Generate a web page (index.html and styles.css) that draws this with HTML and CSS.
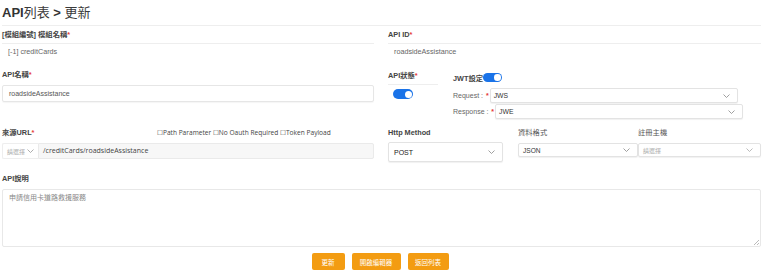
FILE: index.html
```html
<!DOCTYPE html>
<html lang="zh-Hant">
<head>
<meta charset="utf-8">
<link rel="stylesheet" href="styles.css">
</head>
<body>
<div class="page">
  <h1 class="title"><span class="title-en">API</span>列表 <span class="title-en">&gt;</span> 更新</h1>

  <div class="row r1">
    <div class="field">
      <div class="label line">[模組編號] 模組名稱<span class="req">*</span></div>
      <div class="value">[-1] creditCards</div>
    </div>
    <div class="field">
      <div class="label line">API ID<span class="req">*</span></div>
      <div class="value">roadsideAssistance</div>
    </div>
  </div>

  <div class="row r2">
    <div class="field">
      <div class="label">API名稱<span class="req">*</span></div>
      <div class="input">roadsideAssistance</div>
    </div>
    <div class="status-jwt">
      <div class="status">
        <div class="label line">API狀態<span class="req">*</span></div>
        <span class="toggle"><span class="knob"></span></span>
      </div>
      <div class="jwt">
        <div class="jwt-head"><span class="label">JWT設定</span><span class="toggle small"><span class="knob"></span></span></div>
        <div class="jwt-row">
          <span class="jwt-label">Request : </span><span class="req">*</span>
          <div class="select jwt-sel">JWS<svg class="chev" width="7" height="4" viewBox="0 0 7 4"><path d="M.5.5 3.5 3.5 6.5.5" fill="none" stroke="#888" stroke-width=".8"/></svg></div>
        </div>
        <div class="jwt-row">
          <span class="jwt-label">Response : </span><span class="req">*</span>
          <div class="select jwt-sel">JWE<svg class="chev" width="7" height="4" viewBox="0 0 7 4"><path d="M.5.5 3.5 3.5 6.5.5" fill="none" stroke="#888" stroke-width=".8"/></svg></div>
        </div>
      </div>
    </div>
  </div>

  <div class="row r3">
    <div class="field">
      <div class="label url-head"><span>來源URL<span class="req">*</span></span><span class="checks">☐Path Parameter ☐No Oauth Required ☐Token Payload</span></div>
      <div class="url-group">
        <div class="url-sel">請選擇<svg class="chev" width="7" height="4" viewBox="0 0 7 4"><path d="M.5.5 3.5 3.5 6.5.5" fill="none" stroke="#999" stroke-width=".8"/></svg></div>
        <div class="url-input">/creditCards/roadsideAssistance</div>
      </div>
    </div>
    <div class="triple">
      <div class="col-method">
        <div class="label">Http Method</div>
        <div class="select method-sel">POST<svg class="chev" width="7" height="4" viewBox="0 0 7 4"><path d="M.5.5 3.5 3.5 6.5.5" fill="none" stroke="#888" stroke-width=".8"/></svg></div>
      </div>
      <div class="col-format">
        <div class="label">資料格式</div>
        <div class="select small-sel">JSON<svg class="chev" width="7" height="4" viewBox="0 0 7 4"><path d="M.5.5 3.5 3.5 6.5.5" fill="none" stroke="#888" stroke-width=".8"/></svg></div>
      </div>
      <div class="col-host">
        <div class="label">註冊主機</div>
        <div class="select small-sel placeholder">請選擇<svg class="chev" width="7" height="4" viewBox="0 0 7 4"><path d="M.5.5 3.5 3.5 6.5.5" fill="none" stroke="#aaa" stroke-width=".8"/></svg></div>
      </div>
    </div>
  </div>

  <div class="desc">
    <div class="label">API說明</div>
    <div class="textarea">申請信用卡道路救援服務<span class="grip"></span></div>
  </div>

  <div class="actions">
    <button class="btn b1">更新</button>
    <button class="btn b2">開啟編輯器</button>
    <button class="btn b3">返回列表</button>
  </div>
</div>
</body>
</html>
```
FILE: styles.css
```css
* { box-sizing: border-box; }
body {
  margin: 0;
  width: 768px;
  height: 273px;
  overflow: hidden;
  background: #fff;
  font-family: "Liberation Sans", Arial, "Noto Sans CJK TC", sans-serif;
  color: #555;
}
.page { padding: 0 7px 0 2px; }

.title {
  margin: 0;
  height: 26px;
  line-height: 25px;
  font-size: 13px;
  font-weight: normal;
  color: #3a3a3a;
  border-bottom: 1px solid #eee;
}
.title-en { font-weight: bold; color: #333; }

.row {
  display: grid;
  grid-template-columns: 372px 373px;
  column-gap: 14px;
}

.label {
  font-size: 7.3px;
  font-weight: bold;
  color: #444;
  line-height: 18px;
  height: 18px;
  white-space: nowrap;
}
.label.line { border-bottom: 1px solid #eee; }
.req { color: #e53935; font-weight: bold; }

.value {
  font-size: 7.2px;
  color: #666;
  line-height: 15px;
  padding-left: 6px;
}

.r2 { margin-top: 7px; }
.input {
  margin-top: 1px;
  height: 17px;
  line-height: 15px;
  border: 1px solid #e6e6e6;
  border-radius: 2px;
  box-shadow: 0 1px 1px rgba(0,0,0,0.04);
  font-size: 7px;
  color: #555;
  padding-left: 6px;
}

.status-jwt { display: flex; align-items: flex-start; }
.status { width: 50px; margin-right: 15px; }
.status .label { height: 19px; line-height: 20px; }

.toggle {
  display: flex;
  align-items: center;
  justify-content: flex-end;
  width: 20px;
  height: 10px;
  border-radius: 5px;
  background: #1a73e8;
  padding: 0 1.5px;
  margin: 4px 0 0 5px;
}
.knob {
  width: 7px;
  height: 7px;
  border-radius: 50%;
  background: #fff;
}
.toggle.small { width: 19px; height: 9px; margin: 0 0 3px 0; }
.toggle.small .knob { width: 6.5px; height: 6.5px; }

.jwt-head {
  display: flex;
  align-items: center;
  height: 20px;
  padding-top: 6px;
}
.jwt-head .label { height: 14px; line-height: 14px; }
.jwt-row {
  display: flex;
  align-items: center;
  margin-top: 2px;
}
.jwt-row + .jwt-row { margin-top: 1px; }
.jwt-label { font-size: 7px; color: #666; white-space: pre; }
.jwt-row .req { font-size: 7px; margin: 0 1px 0 1px; }

.select {
  position: relative;
  display: flex;
  align-items: center;
  justify-content: space-between;
  background: #fff;
  border: 1px solid #e3e3e3;
  border-radius: 2px;
  box-shadow: 0 1px 1px rgba(0,0,0,0.06);
  font-size: 6.8px;
  color: #333;
  padding: 0 7px 0 3px;
}
.chev { flex: none; }
.jwt-sel { width: 248px; height: 15px; }

.r3 { margin-top: 5px; }
.url-head { display: flex; font-weight: bold; }
.url-head > span:first-child { width: 155px; }
.checks {
  font-family: "Open Sans", "DejaVu Sans", sans-serif;
  font-weight: normal;
  font-size: 6.6px;
  color: #444;
}
.url-group {
  display: flex;
  margin-top: 1px;
  height: 16px;
}
.url-sel {
  width: 36px;
  display: flex;
  align-items: center;
  justify-content: space-between;
  padding: 0 4px 0 4px;
  font-size: 6px;
  color: #aaa;
  border: 1px solid #eee;
  border-right: none;
  border-radius: 2px 0 0 2px;
}
.url-input {
  flex: 1;
  background: #f7f7f7;
  border: 1px solid #eaeaea;
  border-radius: 0 2px 2px 0;
  font-family: "Open Sans", "Liberation Sans", sans-serif;
  font-size: 7px;
  line-height: 14px;
  color: #444;
  padding-left: 4px;
}

.triple { display: flex; }
.col-method { width: 115px; margin-right: 15px; }
.col-format { width: 120px; }
.col-host { flex: 1; }
.col-format .label, .col-host .label { font-weight: normal; color: #555; }
.method-sel { height: 20px; font-size: 7px; color: #222; padding-left: 5px; }
.small-sel { margin-top: 1px; height: 14px; font-size: 6.6px; padding-left: 4px; }
.placeholder { color: #aaa; font-size: 6px; }

.desc { margin-top: 9px; }
.desc .label { height: 16px; line-height: 16px; }
.textarea {
  position: relative;
  margin-top: 2px;
  height: 58px;
  width: 759px;
  border: 1px solid #e8e8e8;
  border-radius: 2px;
  font-size: 7px;
  color: #888;
  padding: 3px 6px;
  line-height: 10px;
}
.grip {
  position: absolute;
  right: 1px;
  bottom: 1px;
  width: 5px;
  height: 5px;
  background: linear-gradient(135deg, transparent 45%, #bbb 45%, #bbb 55%, transparent 55%, transparent 70%, #bbb 70%, #bbb 80%, transparent 80%);
}

.actions {
  display: flex;
  justify-content: center;
  gap: 7px;
  margin-top: 6px;
  padding-right: 3px;
}
.btn {
  height: 17px;
  border: none;
  border-radius: 2px;
  background: #f39c12;
  color: #fff;
  font-family: "Liberation Sans", "Noto Sans CJK TC", sans-serif;
  font-size: 6.5px;
  padding: 0;
}
.b1 { width: 33px; }
.b2 { width: 49px; }
.b3 { width: 41px; }
```
